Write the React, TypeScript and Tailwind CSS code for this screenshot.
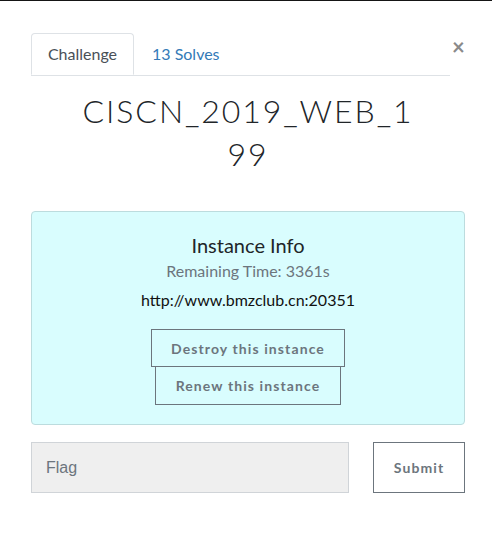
import React from "react";

export default function App() {
  return (
    <div className="w-[492px] h-[541px] bg-white relative overflow-hidden" style={{ fontFamily: "Lato, 'Open Sans', sans-serif" }}>
      <div className="h-px bg-[#151515] w-full" />
      <div className="pl-[31px] pr-[27px] pt-[32px]">
        <div className="flex items-start">
          <div className="w-[419px] shrink-0 flex border-b border-[#dee2e6]">
            <div className="h-[42px] w-[103px] border border-[#dee2e6] border-b-white -mb-px rounded-t-[4px] bg-white flex items-center justify-center text-[16px] text-[#495057]">
              Challenge
            </div>
            <div className="h-[42px] px-[18px] flex items-center text-[16px] text-[#337ab7]">13 Solves</div>
          </div>
          <div className="ml-[2px] mt-[3px] text-[22px] font-bold leading-none text-[#8a8a8a]">×</div>
        </div>

        <h1 className="mt-[13px] text-center text-[32px] font-light leading-[43px] tracking-[0.06em] text-[#212529]">
          CISCN_2019_WEB_1
          <br />
          99
        </h1>

        <div className="mt-[36px] w-[434px] h-[214px] rounded-[4px] border border-[#bcdcde] bg-[#d9fdfe] flex flex-col items-center pt-[20px]">
          <div className="text-[20px] leading-[26px] text-[#212529]">Instance Info</div>
          <div className="mt-[3px] text-[16px] leading-[20px] text-[#6c757d]">Remaining Time: 3361s</div>
          <div className="mt-[9px] text-[16px] leading-[20px] text-[#111]">http://www.bmzclub.cn:20351</div>
          <div className="mt-[19px] w-[194px] h-[38px] border border-[#6c757d] flex items-center justify-center text-[14px] font-bold tracking-[1.1px] text-[#6c757d]">
            Destroy this instance
          </div>
          <div className="w-[186px] h-[38px] border border-[#6c757d] border-t-0 flex items-center justify-center text-[14px] font-bold tracking-[1.1px] text-[#6c757d]">
            Renew this instance
          </div>
        </div>

        <div className="mt-[17px] flex items-start">
          <div className="w-[318px] h-[51px] bg-[#efefef] border border-[#d0d4d8] flex items-center pl-[14px] text-[16px] text-[#6c757d]" style={{ fontFamily: "'Liberation Sans', Arial, sans-serif" }}>
            Flag
          </div>
          <div className="ml-[24px] w-[92px] h-[51px] border border-[#6c757d] flex items-center justify-center text-[14px] font-bold tracking-[1.1px] text-[#6c757d]">
            Submit
          </div>
        </div>
      </div>
    </div>
  );
}
